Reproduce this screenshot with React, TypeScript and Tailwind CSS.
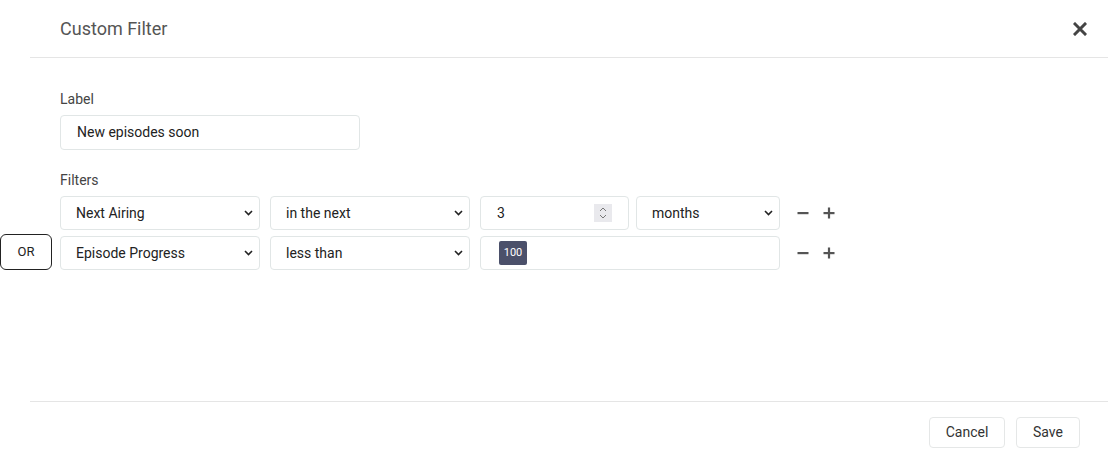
import React from "react";

const Chevron = () => (
  <svg width="9" height="6" viewBox="0 0 9 6" className="shrink-0">
    <path d="M1 1 L4.5 4.5 L8 1" fill="none" stroke="#222" strokeWidth="1.6" />
  </svg>
);

const Select = ({ label, w }: { label: string; w: string }) => (
  <div
    className={`${w} h-[34px] flex items-center justify-between pl-[15px] pr-[6px] border border-[#e1e6e6] rounded-[4px] bg-white text-[14px] text-[#222]`}
  >
    <span>{label}</span>
    <Chevron />
  </div>
);

const PlusMinus = () => (
  <div className="flex items-center gap-[14px] ml-[7px]">
    <svg width="12" height="12" viewBox="0 0 12 12">
      <rect x="0.5" y="5" width="11" height="2.2" fill="#555" />
    </svg>
    <svg width="12" height="12" viewBox="0 0 12 12">
      <rect x="0.5" y="5" width="11" height="2.2" fill="#555" />
      <rect x="4.9" y="0.5" width="2.2" height="11" fill="#555" />
    </svg>
  </div>
);

export default function App() {
  return (
    <div
      className="w-[1108px] h-[461px] bg-white text-[#222] relative"
      style={{ fontFamily: "Roboto, 'Liberation Sans', sans-serif" }}
    >
      {/* Header */}
      <div className="ml-[30px] h-[58px] border-b border-[#e5e5e5] flex items-center justify-between pl-[30px] pr-[21px]">
        <span className="text-[18px] text-[#555] pb-[1px]">Custom Filter</span>
        <svg width="14" height="14" viewBox="0 0 14 14">
          <path d="M2 2 L12 12 M12 2 L2 12" stroke="#444" strokeWidth="3" strokeLinecap="square" />
        </svg>
      </div>

      {/* Body */}
      <div className="h-[343px] pt-[31px]">
        <div className="pl-[60px]">
          <div className="text-[14px] leading-[20px] text-[#444]">Label</div>
          <div className="mt-[6px] w-[300px] h-[35px] flex items-center pl-[16px] border border-[#e1e6e6] rounded-[4px] text-[14px] text-[#222]">
            New episodes soon
          </div>
          <div className="mt-[20px] text-[14px] leading-[20px] text-[#444]">Filters</div>
        </div>

        <div className="mt-[6px] flex flex-col gap-[6px]">
          <div className="flex items-center pl-[60px] gap-[10px]">
            <Select label="Next Airing" w="w-[200px]" />
            <Select label="in the next" w="w-[200px]" />
            <div className="w-[149px] h-[34px] flex items-center justify-between pl-[16px] pr-[16px] border border-[#e1e6e6] rounded-[4px] text-[14px] text-[#222]">
              <span>3</span>
              <div className="w-[18px] h-[18px] bg-[#e9e9ed] flex flex-col items-center justify-center gap-[2px]">
                <svg width="8" height="5" viewBox="0 0 8 5">
                  <path d="M1 4 L4 1 L7 4" fill="none" stroke="#777" strokeWidth="1" />
                </svg>
                <svg width="8" height="5" viewBox="0 0 8 5">
                  <path d="M1 1 L4 4 L7 1" fill="none" stroke="#777" strokeWidth="1" />
                </svg>
              </div>
            </div>
            <div className="-ml-[3px]">
              <Select label="months" w="w-[144px]" />
            </div>
            <PlusMinus />
          </div>

          <div className="flex items-center gap-[10px]">
            <div className="w-[52px] h-[36px] mr-[-2px] border border-[#222] rounded-[6px] flex items-center justify-center text-[13px] text-[#222] -mt-[2px]">
              OR
            </div>
            <Select label="Episode Progress" w="w-[200px]" />
            <Select label="less than" w="w-[200px]" />
            <div className="w-[300px] h-[34px] flex items-center pl-[18px] border border-[#e1e6e6] rounded-[4px]">
              <div className="w-[28px] h-[24px] bg-[#4b506a] rounded-[2px] flex items-center justify-center text-[11px] text-white">
                100
              </div>
            </div>
            <PlusMinus />
          </div>
        </div>
      </div>

      {/* Footer */}
      <div className="ml-[30px] border-t border-[#e5e5e5] h-[60px] flex items-start justify-end gap-[11px] pr-[28px] pt-[15px]">
        <div className="w-[76px] h-[31px] border border-[#e5e7e7] rounded-[4px] flex items-center justify-center text-[14px] text-[#333]">
          Cancel
        </div>
        <div className="w-[64px] h-[31px] border border-[#e5e7e7] rounded-[4px] flex items-center justify-center text-[14px] text-[#333]">
          Save
        </div>
      </div>
    </div>
  );
}
